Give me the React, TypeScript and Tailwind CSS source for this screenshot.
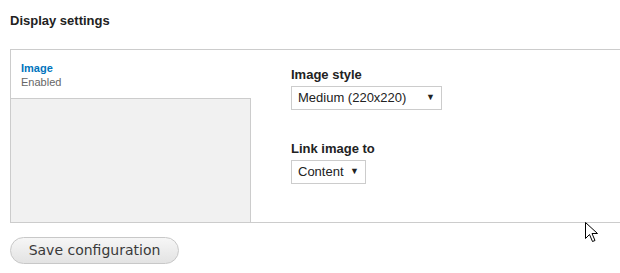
export default function App() {
  return (
    <div className="relative w-[620px] h-[273px] overflow-hidden bg-white font-['Liberation_Sans',Arial,sans-serif] text-[#333]">
      <h2 className="pl-[10px] pt-[13px] text-[13px] leading-[16px] font-bold text-[#222]">Display settings</h2>

      <div className="ml-[10px] mt-[20px] w-[700px] flex border-l border-t border-b border-[#cccccc]">
        <div className="w-[240px] flex flex-col">
          <div className="h-[48px] pl-[10px] pt-[11px]">
            <div className="text-[11px] leading-[14px] font-bold text-[#0074bd]">Image</div>
            <div className="text-[11px] leading-[14px] text-[#666]">Enabled</div>
          </div>
          <div className="h-[124px] bg-[#f1f1f1] border-t border-r border-[#cccccc]"></div>
        </div>

        <div className="pl-[40px] pt-[17px]">
          <div className="text-[13px] leading-[16px] font-bold text-[#222]">Image style</div>
          <div className="mt-[3px] w-[151px] h-[24px] border border-[#cccccc] flex items-center justify-between pl-[6px] pr-[6px] text-[13px] text-[#222]">
            <span>Medium (220x220)</span>
            <span className="text-[9px]">▼</span>
          </div>

          <div className="mt-[31px] text-[13px] leading-[16px] font-bold text-[#222]">Link image to</div>
          <div className="mt-[3px] w-[75px] h-[24px] border border-[#cccccc] flex items-center justify-between pl-[6px] pr-[6px] text-[13px] text-[#222]">
            <span>Content</span>
            <span className="text-[9px]">▼</span>
          </div>
        </div>
      </div>

      <div className="pl-[10px] pt-[14px]">
        <button className="w-[169px] h-[27px] rounded-full border border-[#c8c8c8] bg-gradient-to-b from-[#f6f6f6] to-[#e3e3e3] font-['DejaVu_Sans',sans-serif] text-[14px] text-[#3a3a3a]">
          Save configuration
        </button>
      </div>

      <svg className="absolute left-[585px] top-[222px]" width="14" height="21" viewBox="0 0 14 21">
        <path d="M0.5 0.5 L0.5 16.5 L4.5 12.5 L7.5 19.5 L10 18.5 L7 11.5 L12.5 11.5 Z" fill="#fff" stroke="#000" strokeWidth="1" />
      </svg>
    </div>
  );
}
